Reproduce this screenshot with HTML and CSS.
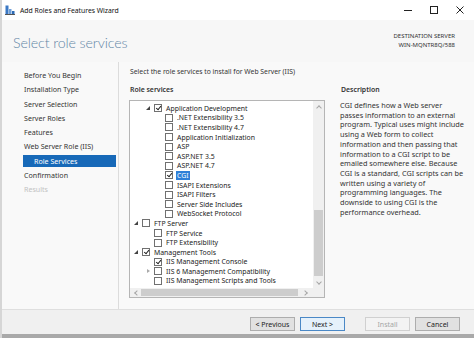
FILE: index.html
```html
<!DOCTYPE html>
<html>
<head>
<meta charset="utf-8">
<link rel="stylesheet" href="styles.css">
</head>
<body>
<div class="window">
  <div class="titlebar">
    <svg class="appicon" width="10" height="10" viewBox="0 0 10 10">
      <rect x="0.5" y="0.5" width="3" height="9" fill="#3b78c4"/>
      <rect x="4" y="4" width="2.5" height="5.5" fill="#6e9fd9"/>
      <rect x="7" y="6" width="2.5" height="3.5" fill="#2d6bb6"/>
      <rect x="0" y="9" width="10" height="1" fill="#555"/>
    </svg>
    <span class="title">Add Roles and Features Wizard</span>
    <div class="controls">
      <svg width="10" height="10" viewBox="0 0 10 10"><line x1="1" y1="5.5" x2="9" y2="5.5" stroke="#222" stroke-width="1"/></svg>
      <svg width="10" height="10" viewBox="0 0 10 10"><rect x="1.5" y="1.5" width="7" height="7" fill="none" stroke="#222" stroke-width="1"/></svg>
      <svg width="10" height="10" viewBox="0 0 10 10"><path d="M1.5 1.5 L8.5 8.5 M8.5 1.5 L1.5 8.5" stroke="#222" stroke-width="1"/></svg>
    </div>
  </div>

  <div class="header">
    <h1>Select role services</h1>
    <div class="dest">DESTINATION SERVER<br>WIN-MQNTR8Q/588</div>
  </div>

  <div class="content">
    <ul class="nav">
      <li>Before You Begin</li>
      <li>Installation Type</li>
      <li>Server Selection</li>
      <li>Server Roles</li>
      <li>Features</li>
      <li>Web Server Role (IIS)</li>
      <li class="active">Role Services</li>
      <li>Confirmation</li>
      <li class="disabled">Results</li>
    </ul>

    <div class="main">
      <p class="intro">Select the role services to install for Web Server (IIS)</p>
      <div class="panes">
        <div class="pane">
          <div class="label">Role services</div>
          <div class="treebox">
            <div class="treearea">
              <div class="tree">
                <div class="row l2"><span class="exp open"></span><span class="cb on"></span><span>Application Development</span></div>
                <div class="row l3"><span class="exp"></span><span class="cb"></span><span>.NET Extensibility 3.5</span></div>
                <div class="row l3"><span class="exp"></span><span class="cb"></span><span>.NET Extensibility 4.7</span></div>
                <div class="row l3"><span class="exp"></span><span class="cb"></span><span>Application Initialization</span></div>
                <div class="row l3"><span class="exp"></span><span class="cb"></span><span>ASP</span></div>
                <div class="row l3"><span class="exp"></span><span class="cb"></span><span>ASP.NET 3.5</span></div>
                <div class="row l3"><span class="exp"></span><span class="cb"></span><span>ASP.NET 4.7</span></div>
                <div class="row l3"><span class="exp"></span><span class="cb on"></span><span class="sel">CGI</span></div>
                <div class="row l3"><span class="exp"></span><span class="cb"></span><span>ISAPI Extensions</span></div>
                <div class="row l3"><span class="exp"></span><span class="cb"></span><span>ISAPI Filters</span></div>
                <div class="row l3"><span class="exp"></span><span class="cb"></span><span>Server Side Includes</span></div>
                <div class="row l3"><span class="exp"></span><span class="cb"></span><span>WebSocket Protocol</span></div>
                <div class="row l1"><span class="exp open"></span><span class="cb"></span><span>FTP Server</span></div>
                <div class="row l2"><span class="exp"></span><span class="cb"></span><span>FTP Service</span></div>
                <div class="row l2"><span class="exp"></span><span class="cb"></span><span>FTP Extensibility</span></div>
                <div class="row l1"><span class="exp open"></span><span class="cb on"></span><span>Management Tools</span></div>
                <div class="row l2"><span class="exp"></span><span class="cb on"></span><span>IIS Management Console</span></div>
                <div class="row l2"><span class="exp closed"></span><span class="cb"></span><span>IIS 6 Management Compatibility</span></div>
                <div class="row l2"><span class="exp"></span><span class="cb"></span><span>IIS Management Scripts and Tools</span></div>
              </div>
              <div class="vscroll">
                <span class="arrow up"></span>
                <span class="vtrack"><span class="vthumb"></span></span>
                <span class="arrow down"></span>
              </div>
            </div>
            <div class="hscroll">
              <span class="arrow left"></span>
              <span class="hthumb"></span>
              <span class="arrow right"></span>
              <span class="corner"></span>
            </div>
          </div>
        </div>
        <div class="pane">
          <div class="label">Description</div>
          <p class="desc">CGI defines how a Web server<br>passes information to an external<br>program. Typical uses might include<br>using a Web form to collect<br>information and then passing that<br>information to a CGI script to be<br>emailed somewhere else. Because<br>CGI is a standard, CGI scripts can be<br>written using a variety of<br>programming languages. The<br>downside to using CGI is the<br>performance overhead.</p>
        </div>
      </div>
    </div>
  </div>

  <div class="footer">
    <button class="btn">&lt; Previous</button>
    <button class="btn default">Next &gt;</button>
    <button class="btn disabled install">Install</button>
    <button class="btn">Cancel</button>
  </div>
  <div class="strip"></div>
</div>
</body>
</html>
```

FILE: styles.css
```css
* { box-sizing: border-box; }
html, body { margin: 0; padding: 0; }
body {
  width: 474px;
  height: 338px;
  overflow: hidden;
  background: #d8d8d8;
  font-family: "Noto Sans", "Open Sans", sans-serif;
  color: #222;
}
.window {
  width: 474px;
  height: 338px;
  display: flex;
  flex-direction: column;
  border-left: 2px solid #d6d6d6;
  background: #f8f8f8;
}
.titlebar {
  height: 20px;
  flex: none;
  background: #ffffff;
  display: flex;
  align-items: center;
  padding-left: 3px;
}
.appicon { margin-right: 5px; }
.title { font-size: 6.8px; color: #111; }
.controls {
  margin-left: auto;
  display: flex;
  gap: 16px;
  margin-right: 9px;
}
.header {
  height: 42px;
  flex: none;
  background: #f7f7f7;
  display: flex;
  align-items: flex-start;
  justify-content: space-between;
}
h1 {
  margin: 14px 0 0 11px;
  font-family: Lato, "Noto Sans", sans-serif;
  font-size: 14.2px;
  line-height: 17px;
  font-weight: 300;
  color: #6286a6;
  letter-spacing: -0.1px;
}
.dest {
  margin: 12px 19px 0 0;
  text-align: right;
  font-size: 6px;
  line-height: 9px;
  color: #333;
}
.content {
  flex: 1;
  display: flex;
  background: #f9f9f9;
}
.nav {
  list-style: none;
  margin: 0;
  padding: 6px 2px 0 21px;
  width: 117px;
  flex: none;
  border-right: 1px solid #dcdcdc;
  font-size: 7.1px;
  color: #333;
}
.nav li {
  height: 14.3px;
  line-height: 14.3px;
  padding-left: 1px;
  white-space: nowrap;
}
.nav li.active {
  background: #1769b8;
  color: #fff;
  padding-left: 11px;
  height: 12px;
  line-height: 12px;
  margin: 1px 0 1.3px;
}
.nav li.disabled { color: #c2c2c2; }
.main {
  flex: 1;
  padding: 5px 0 0 10px;
  font-size: 6.8px;
  color: #333;
}
.intro {
  margin: 0 0 0 1px;
  line-height: 10px;
  height: 10px;
}
.panes {
  display: grid;
  grid-template-columns: 196px 1fr;
  column-gap: 15px;
  margin-top: 8px;
}
.label {
  height: 10px;
  line-height: 10px;
  margin-left: 1px;
  font-size: 6.9px;
  font-weight: 600;
  color: #333;
}
.treebox {
  margin-top: 5px;
  height: 198px;
  border: 1px solid #b5b5b5;
  background: #fff;
  display: flex;
  flex-direction: column;
}
.treearea {
  flex: 1;
  display: flex;
  min-height: 0;
}
.tree {
  flex: 1;
  padding-top: 2.5px;
  overflow: hidden;
  font-size: 6.9px;
}
.row {
  height: 9.6px;
  display: flex;
  align-items: center;
  white-space: nowrap;
  color: #222;
}
.row.l1 { padding-left: 3px; }
.row.l2 { padding-left: 15px; }
.row.l3 { padding-left: 26px; }
.exp {
  width: 9px;
  height: 8px;
  flex: none;
  position: relative;
}
.exp.open::after {
  content: "";
  position: absolute;
  left: 1px;
  top: 2px;
  width: 0;
  height: 0;
  border-left: 4px solid transparent;
  border-bottom: 4px solid #444;
}
.exp.closed::after {
  content: "";
  position: absolute;
  left: 2px;
  top: 1.5px;
  width: 0;
  height: 0;
  border-top: 2.5px solid transparent;
  border-bottom: 2.5px solid transparent;
  border-left: 3px solid #aaa;
}
.cb {
  width: 8px;
  height: 8px;
  flex: none;
  border: 1px solid #707070;
  background: #fff;
  margin-right: 4px;
  position: relative;
}
.cb.on::after {
  content: "";
  position: absolute;
  left: 1.6px;
  top: 0px;
  width: 2.2px;
  height: 4.2px;
  border-right: 1.2px solid #222;
  border-bottom: 1.2px solid #222;
  transform: rotate(40deg);
}
.sel {
  background: #2e7fd8;
  color: #fff;
  padding: 0 1px;
  line-height: 9px;
  margin-left: -1px;
}
.vscroll {
  width: 11px;
  flex: none;
  background: #f0f0f0;
  display: flex;
  flex-direction: column;
}
.vtrack {
  flex: 1;
  position: relative;
}
.vthumb {
  position: absolute;
  left: 1px;
  right: 1px;
  top: 98px;
  height: 66px;
  background: #cdcdcd;
}
.arrow {
  flex: none;
  display: flex;
  align-items: center;
  justify-content: center;
}
.arrow::after {
  content: "";
  width: 3px;
  height: 3px;
  border-left: 1px solid #a6a6a6;
  border-top: 1px solid #a6a6a6;
}
.arrow.up, .arrow.down { height: 11px; }
.arrow.up::after { transform: rotate(45deg); margin-top: 2px; }
.arrow.down::after { transform: rotate(225deg); margin-top: -2px; }
.hscroll {
  height: 9px;
  flex: none;
  background: #f0f0f0;
  display: flex;
  align-items: stretch;
}
.arrow.left, .arrow.right { width: 11px; }
.arrow.left::after { transform: rotate(-45deg); margin-left: 2px; }
.arrow.right::after { transform: rotate(135deg); margin-left: -2px; }
.hthumb {
  width: 158px;
  margin: 1px 0;
  background: #cdcdcd;
}
.arrow.right { width: 15px; }
.corner { width: 11px; }
.desc {
  margin: 6px 0 0 0;
  font-size: 7.3px;
  line-height: 9.7px;
  white-space: nowrap;
  color: #333;
}
.footer {
  height: 25px;
  flex: none;
  background: #f0f0f0;
  border-top: 1px solid #dfdfdf;
  display: flex;
  justify-content: flex-end;
  align-items: flex-start;
  padding: 7px 14px 0 0;
  gap: 5px;
}
.btn {
  width: 45px;
  height: 14px;
  padding: 0;
  font-family: "Noto Sans", "Open Sans", sans-serif;
  font-size: 7px;
  color: #222;
  background: #e1e1e1;
  border: 1px solid #adadad;
  border-radius: 0;
}
.btn.default {
  border-color: #4a88c6;
  background: #e5f1fb;
}
.btn.install { margin-left: 15px; }
.btn.disabled {
  color: #a5a5a5;
  background: #f3f3f3;
  border-color: #d0d0d0;
}
.strip {
  height: 4px;
  flex: none;
  background: #a9a9a9;
}
```
